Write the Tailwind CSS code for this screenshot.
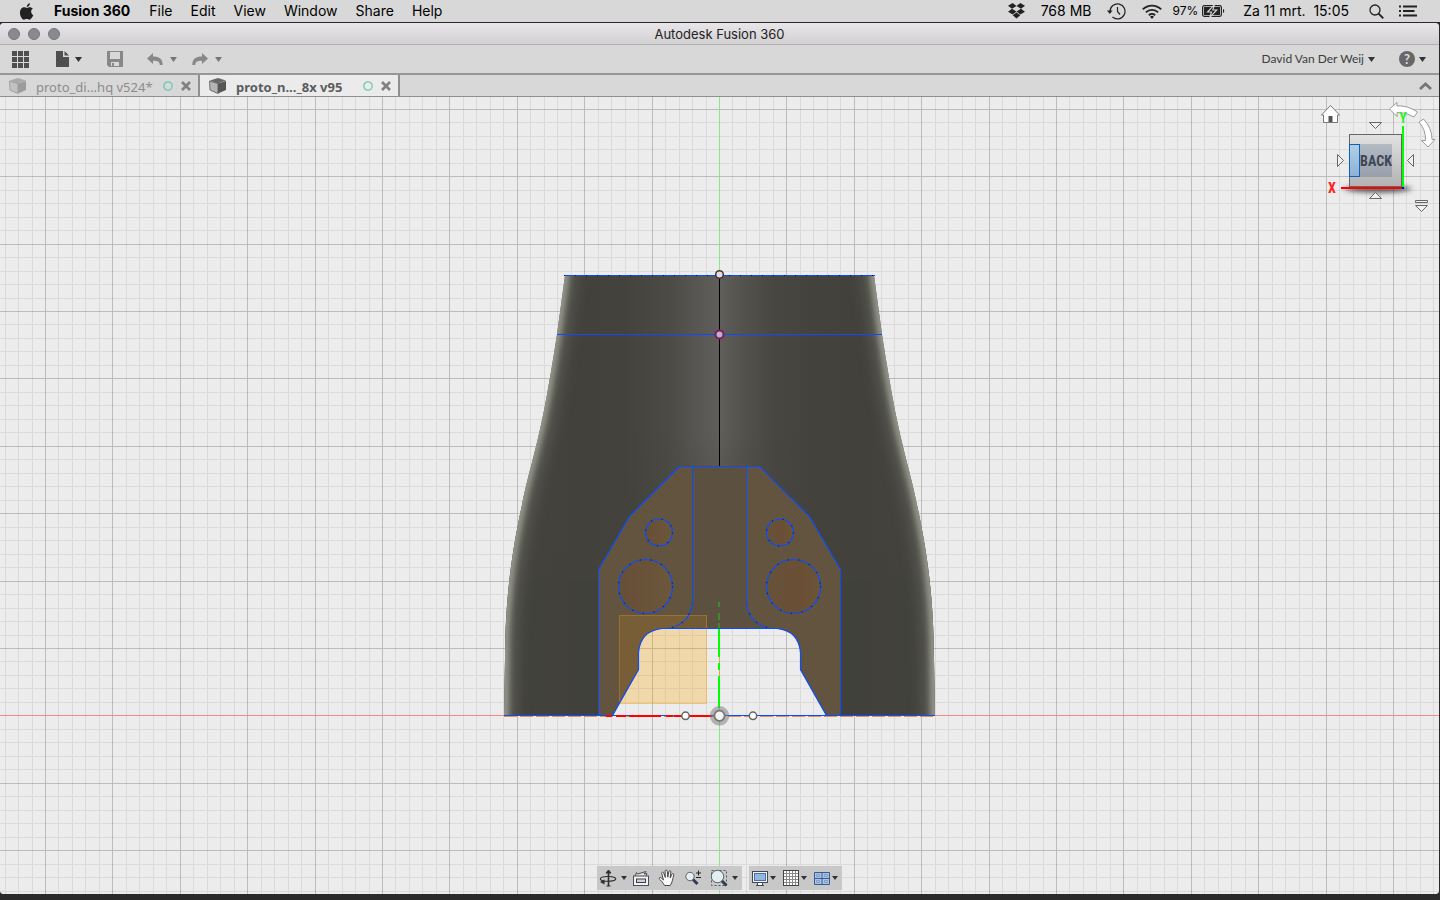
<!DOCTYPE html>
<html lang="nl">
<head>
<meta charset="utf-8">
<meta name="viewport" content="width=device-width, initial-scale=1">
<title>Autodesk Fusion 360</title>
<script src="https://cdn.jsdelivr.net/npm/@tailwindcss/browser@4"></script>
</head>
<body class="flex h-screen flex-col overflow-hidden bg-[#2a2a2a] font-['Inter','Liberation_Sans',sans-serif] text-black">

<!-- System menu bar -->
<header class="flex h-[22px] shrink-0 items-center justify-between bg-[#d8d8d8] text-sm leading-5">
  <nav class="flex items-center gap-[18px] pl-[20px]">
    <button aria-label="Apple" class="mr-[2px] flex w-[14px] justify-center"><svg width="14" height="17" viewBox="0 0 14 17" fill="#222"><path d="M9.900.3c.1 1-.3 1.900-.8 2.500-.6.700-1.400 1.200-2.300 1.100-.1-.9.300-1.900.9-2.500C8.200.8 9.200.4 9.900.3zM13.300 12.300c-.4.900-.6 1.300-1.100 2-.7 1.100-1.600 2.400-2.800 2.400-1 0-1.300-.7-2.700-.7s-1.700.7-2.700.7c-1.200 0-2.100-1.200-2.700-2.200C-.5 11.700-.4 7.900 1 6c.8-1.200 2-1.800 3.100-1.800 1.200 0 1.900.7 2.900.7s1.600-.7 2.900-.7c1 0 2.100.5 2.900 1.500-2.500 1.400-2.100 5 .5 6.600z"/></svg></button>
    <button class="mr-px font-bold">Fusion 360</button>
    <button>File</button>
    <button>Edit</button>
    <button>View</button>
    <button>Window</button>
    <button>Share</button>
    <button>Help</button>
  </nav>
  <div class="flex items-center pr-[23px]">
    <button aria-label="Dropbox" class="mr-4"><svg width="17" height="16" viewBox="0 0 17 16" fill="#222"><path d="M4.700 0 8.500 2.900 4 5.700 0 2.700zM12.300 0 17 2.700 13 5.700 8.500 2.900zM4 5.700 8.500 8.500 4.700 11.500 0 8.700zM13 5.700 17 8.700 12.300 11.500 8.500 8.500zM4.700 12.300 8.500 9.500 12.300 12.300 8.500 15.500z"/></svg></button>
    <span class="mr-4">768 MB</span>
    <button aria-label="Time Machine" class="mr-4"><svg width="19" height="17" viewBox="0 0 19 17" fill="none" stroke="#222" stroke-width="1.200"><path d="M3 8.500A7.500 7.500 0 1 1 5.500 14"/><path d="M10.500 4v4.500l2.500 3"/><path d="M0 7.500h5.600L2.800 11z" fill="#222" stroke="none"/></svg></button>
    <button aria-label="Wi-Fi" class="mr-[10px]"><svg width="20" height="15" viewBox="0 0 20 15" fill="none" stroke="#222" stroke-width="1.900"><path d="M.8 5.400a13 13 0 0 1 18.400 0M3.900 8.400a8.700 8.700 0 0 1 12.200 0M6.900 11.200a4.500 4.500 0 0 1 6.200 0"/><path d="M10 14.900 8 12.700a3 3 0 0 1 4 0z" fill="#222" stroke="none"/></svg></button>
    <span class="mr-1 text-xs leading-5">97%</span>
    <svg class="mr-[18px]" width="23" height="12" viewBox="0 0 23 12" role="img" aria-label="Batterij laadt op"><rect x=".6" y=".6" width="18.800" height="10.800" rx="1.800" fill="none" stroke="#222" stroke-width="1.200"/><rect x="2" y="2" width="16" height="8" fill="#222"/><path d="M12.500-.5 5.500 7h4L7.800 12.500l7-7.500h-4z" fill="#222" stroke="#d8d8d8" stroke-width="1.100"/><path d="M21 4c1.600.4 1.600 3.600 0 4z" fill="#222"/></svg>
    <span class="mr-5 whitespace-pre">Za 11 mrt.  15:05</span>
    <button aria-label="Zoek" class="mr-[15px]"><svg width="15" height="15" viewBox="0 0 15 15" fill="none" stroke="#222" stroke-width="1.300"><circle cx="6" cy="6" r="5"/><path d="M9.600 9.600 14.300 14.300" stroke-width="1.900"/></svg></button>
    <button aria-label="Berichtencentrum"><svg width="18" height="12" viewBox="0 0 18 12" fill="#222"><path d="M0 .5h2v2H0zM0 5h2v2H0zM0 9.500h2v2H0zM4 .5h14v2H4zM4 5h11.500v2H4zM4 9.500h14v2H4z"/></svg></button>
  </div>
</header>

<!-- Application window -->
<div class="mt-px mr-px mb-[6px] flex min-h-0 flex-1 flex-col overflow-hidden rounded-sm bg-[#d8d8d8]">
  <div class="relative flex h-[22px] shrink-0 items-center justify-center border-b border-[#b0b0b0] bg-linear-to-b from-[#e8e6e8] to-[#d2d0d2] text-[13px] leading-5">
    <div class="absolute left-2 flex gap-2">
      <button aria-label="Sluit" class="size-3 rounded-full border border-[#77777b] bg-[#8a8a8e]"></button>
      <button aria-label="Minimaliseer" class="size-3 rounded-full border border-[#77777b] bg-[#8a8a8e]"></button>
      <button aria-label="Vergroot" class="size-3 rounded-full border border-[#77777b] bg-[#8a8a8e]"></button>
    </div>
    <h1 class="text-[#222]">Autodesk Fusion 360</h1>
  </div>

  <div class="flex h-[30px] shrink-0 items-center justify-between border-b-2 border-[#979797] pr-[13px] pl-3">
    <div class="flex items-center">
      <button aria-label="Data Panel" class="mr-[27px]"><svg width="17" height="17" viewBox="0 0 17 17" fill="#4f4f4f"><path d="M0 0h5v5H0zM6 0h5v5H6zM12 0h5v5h-5zM0 6h5v5H0zM6 6h5v5H6zM12 6h5v5h-5zM0 12h5v5H0zM6 12h5v5H6zM12 12h5v5h-5z"/></svg></button>
      <button aria-label="File" class="mr-[25px] flex items-center gap-[6px]"><svg width="13" height="16" viewBox="0 0 13 16" fill="#4f4f4f"><path d="M0 0h7v6h6v10H0zM8.500 0 13 4.500H8.500z"/></svg><svg width="7" height="5" viewBox="0 0 7 5" fill="#333"><path d="M0 0h7L3.500 5z"/></svg></button>
      <button aria-label="Save" class="mr-6"><svg width="16" height="16" viewBox="0 0 16 16"><path fill="#888" fill-rule="evenodd" d="M0 0h16v16H2L0 14zM3 1v7h10V1zM4 11v4h8v-4z"/><path fill="#888" d="M5 12h2v3H5z"/></svg></button>
      <button aria-label="Undo" class="mr-[15px] flex items-center gap-[7px]"><svg width="16" height="12" viewBox="0 0 16 12" fill="#888"><path d="M0 5.500 6 0v3.500c6.500 0 9.800 2.600 9.600 8.500h-2.800C12.600 8.700 10.700 7.600 6 7.700V11z"/></svg><svg width="7" height="5" viewBox="0 0 7 5" fill="#777"><path d="M0 0h7L3.500 5z"/></svg></button>
      <button aria-label="Redo" class="flex items-center gap-[7px]"><svg width="16" height="12" viewBox="0 0 16 12" fill="#888"><path d="M16 5.500 10 0v3.500C3.500 3.500.2 6.100.4 12h2.800c.2-3.300 2.100-4.400 6.800-4.300V11z"/></svg><svg width="7" height="5" viewBox="0 0 7 5" fill="#777"><path d="M0 0h7L3.500 5z"/></svg></button>
    </div>
    <div class="flex items-center gap-6 font-['Lato','Open_Sans',sans-serif] text-xs text-[#3c3c3c]">
      <button class="flex items-center gap-1">David Van Der Weij <svg width="7" height="5" viewBox="0 0 7 5" fill="#333"><path d="M0 0h7L3.500 5z"/></svg></button>
      <button aria-label="Help" class="flex items-center gap-1"><span class="flex size-4 items-center justify-center rounded-full bg-[#686868] text-[13px] leading-4 font-bold text-[#dddddd]">?</span><svg width="7" height="5" viewBox="0 0 7 5" fill="#333"><path d="M0 0h7L3.500 5z"/></svg></button>
    </div>
  </div>

  <div class="flex h-[22px] shrink-0 items-center justify-between border-b border-[#8f8f8f] pr-[7px] font-['Noto_Sans','Open_Sans',sans-serif] text-[13px]">
    <div role="tablist" class="flex h-full">
      <div class="flex w-[200px] items-center border-r-2 border-[#8f8f8f] pl-[9px]">
        <svg class="mr-[9px]" width="18" height="16" viewBox="0 0 18 16"><path d="M1 2.500 9 0l8 2.500-8 3z" fill="#aaa"/><path d="M.5 3 9 5.500v10L1 12z" fill="#c2c2c2" stroke="#969696" stroke-width=".8"/><path d="M9 5.500 17 3v9l-8 3.500z" fill="#9c9c9c"/></svg>
        <button role="tab" aria-selected="false" class="flex-1 pt-1 text-left text-[#8c8c8c]">proto_di...hq v524*</button>
        <svg class="mr-2" width="10" height="10" viewBox="0 0 10 10" fill="none" stroke="#6cc9b1" stroke-width="1.300"><circle cx="5" cy="5" r="4.200"/></svg>
        <button aria-label="Close proto_di...hq v524*" class="mr-[7px]"><svg width="10" height="10" viewBox="0 0 10 10" stroke="#808080" stroke-width="2.600"><path d="m1 1 8 8M9 1 1 9"/></svg></button>
      </div>
      <div class="flex w-[200px] items-center border-r-2 border-[#8f8f8f] bg-[#ebebeb] pl-[9px]">
        <svg class="mr-[9px]" width="18" height="16" viewBox="0 0 18 16"><path d="M1 2.500 9 0l8 2.500-8 3z" fill="#666"/><path d="M.5 3 9 5.500v10L1 12z" fill="#b4b4b4" stroke="#555" stroke-width=".8"/><path d="M9 5.500 17 3v9l-8 3.500z" fill="#555"/></svg>
        <button role="tab" aria-selected="true" class="flex-1 pt-1 text-left font-bold text-[#5c5c5c]">proto_n..._8x v95</button>
        <svg class="mr-2" width="10" height="10" viewBox="0 0 10 10" fill="none" stroke="#6cc9b1" stroke-width="1.300"><circle cx="5" cy="5" r="4.200"/></svg>
        <button aria-label="Close proto_n..._8x v95" class="mr-[7px]"><svg width="10" height="10" viewBox="0 0 10 10" stroke="#808080" stroke-width="2.600"><path d="m1 1 8 8M9 1 1 9"/></svg></button>
      </div>
    </div>
    <button aria-label="Collapse"><svg width="13" height="8" viewBox="0 0 13 8" fill="none" stroke="#777" stroke-width="2.800"><path d="m1 7 5.500-5L12 7"/></svg></button>
  </div>

  <!-- Modelling canvas -->
  <main class="relative min-h-0 flex-1 bg-[#ececec]">
    <svg class="block h-full w-full" viewBox="0 97 1439 797" preserveAspectRatio="xMidYMid slice" role="img" aria-label="Model, back view">
      <defs>
        <path id="body" d="M565 275.500 557 334.500Q550 380 543.500 413C534 459 528 474 522 505C512 550 505 600 505 660L504 716H612.500L638.500 669.500V653Q640 631 662 628.500H777Q799 631 800.500 653V669.500L826.500 716H935L934 660C934 600 927 550 917 505C911 474 905 459 895.500 413Q889 380 882 334.500L874 275.500Z"/>
        <path id="plate" d="M679.500 466.500 629.500 516.500 598.500 569.500V715.500H612.500L638.500 669.500V653Q640 631 662 628.500H777Q799 631 800.500 653V669.500L826.500 715.500H840.500V569.500L809.500 516.500 759.500 466.500Z"/>
        <clipPath id="inBody"><use href="#body"/></clipPath>
        <linearGradient id="shade" gradientUnits="userSpaceOnUse" x1="504" x2="935" y1="0" y2="0">
          <stop offset="0" stop-color="#464540"/><stop offset=".17" stop-color="#42413c"/><stop offset=".28" stop-color="#43423d"/><stop offset=".38" stop-color="#4b4a45"/><stop offset=".44" stop-color="#565551"/><stop offset=".5" stop-color="#5f5e5a"/><stop offset=".56" stop-color="#52514c"/><stop offset=".62" stop-color="#484742"/><stop offset=".72" stop-color="#43423d"/><stop offset=".83" stop-color="#42413c"/><stop offset="1" stop-color="#464540"/>
        </linearGradient>
        <linearGradient id="low" x1="0" x2="0" y1="0" y2="1"><stop offset="0" stop-color="#42413c" stop-opacity="0"/><stop offset="1" stop-color="#42413c" stop-opacity=".7"/></linearGradient>
        <linearGradient id="boreL"><stop offset="0" stop-color="#664f36"/><stop offset="1" stop-color="#6c563c"/></linearGradient>
        <linearGradient id="boreR"><stop offset="0" stop-color="#66523a"/><stop offset=".6" stop-color="#6a4f35"/><stop offset="1" stop-color="#6b5438"/></linearGradient>
        <filter id="wide" x="-30%" y="-10%" width="160%" height="120%" color-interpolation-filters="sRGB"><feGaussianBlur stdDeviation="9"/></filter>
        <filter id="tight" x="-30%" y="-10%" width="160%" height="120%" color-interpolation-filters="sRGB"><feGaussianBlur stdDeviation="3"/></filter>
      </defs>

      <g shape-rendering="crispEdges" fill="none">
        <path id="gridMinor" stroke="#000" stroke-opacity=".075"/>
        <path id="gridMajor" stroke="#000" stroke-opacity=".2"/>
        <path d="M-800 715.500H2240" stroke="#f58a8a"/>
        <path d="M719.500-400V275M719.500 716V1400" stroke="#8be58b"/>
      </g>

      <use href="#body" fill="url(#shade)"/>
      <g clip-path="url(#inBody)" fill="none">
        <rect x="500" y="430" width="440" height="150" fill="url(#low)"/>
        <rect x="500" y="580" width="440" height="140" fill="#42413c" fill-opacity=".7"/>
        <g stroke="#7c7e74">
          <path filter="url(#wide)" stroke-width="14" stroke-opacity=".7" d="M562 240 565 275.500 557 334.500Q550 380 543.500 413C534 459 528 474 522 505C512 550 505 600 505 660L504 750M877 240 874 275.500 882 334.500Q889 380 895.500 413C905 459 911 474 917 505C927 550 934 600 934 660L935 750"/>
          <path filter="url(#tight)" stroke="#a3a69a" stroke-width="7" d="M562 240 565 275.500 557 334.500Q550 380 543.500 413C534 459 528 474 522 505C512 550 505 600 505 660L504 750M877 240 874 275.500 882 334.500Q889 380 895.500 413C905 459 911 474 917 505C927 550 934 600 934 660L935 750"/>
        </g>
      </g>

      <use href="#plate" fill="#635440"/>
      <path d="M692.500 466.500H746.500V605Q750 625 771 628.500H668Q689 625 692.500 605Z" fill="#5c5140"/>
      <circle cx="659" cy="532.500" r="13.500" fill="url(#boreL)"/><circle cx="645.500" cy="586.500" r="27" fill="url(#boreL)"/>
      <circle cx="780" cy="532.500" r="13.500" fill="url(#boreR)"/><circle cx="793.500" cy="586.500" r="27" fill="url(#boreR)"/>

      <!-- Work plane handle -->
      <path d="M638.500 669.500V653Q640 631 662 628.500H707V704H619.500Z" fill="#ffa500" fill-opacity=".28"/>
      <path d="M619.500 615.500H707V628.500H662Q640 631 638.500 653V669.500L619.500 703.500Z" fill="#ffa500" fill-opacity=".13"/>
      <rect x="619.500" y="615.500" width="87" height="88" fill="none" stroke="#f0a020" stroke-opacity=".35"/>

      <g fill="none" stroke="#0a4dff" stroke-width="1.200">
        <path d="M679.500 466.500 629.500 516.500 598.500 569.500M612.500 715.500 638.500 669.500V653Q640 631 662 628.500M777 628.500Q799 631 800.500 653V669.500L826.500 715.500M840.500 569.500 809.500 516.500 759.500 466.500M692.500 603Q690 624 668 628.500M746.500 603Q749 624 771 628.500"/>
        <circle cx="659" cy="532.500" r="13.500"/><circle cx="780" cy="532.500" r="13.500"/><circle cx="645.500" cy="586.500" r="27"/><circle cx="793.500" cy="586.500" r="27"/>
      </g>
      <g fill="none" stroke="#111a30" stroke-width="1.200" stroke-dasharray="1 10">
        <circle cx="659" cy="532.500" r="13.500"/><circle cx="780" cy="532.500" r="13.500"/><circle cx="645.500" cy="586.500" r="27"/><circle cx="793.500" cy="586.500" r="27"/>
        <path d="M692.500 603Q690 624 668 628.500M746.500 603Q749 624 771 628.500"/>
      </g>
      <g fill="none" shape-rendering="crispEdges">
        <path stroke="#0a4dff" d="M564 275.500H875M557 334.500H882M679 466.500H760M662 628.500H777M598.500 569V716M840.500 569V716M692.500 466V604M746.500 466V604M504 715.500H935"/>
        <path stroke="#111" stroke-dasharray="1 10" d="M564 275.500H875"/>
        <path stroke="#000" d="M719.500 278V466"/>
        <path stroke="#d9935c" stroke-dasharray="13 3" d="M504 716.500H935"/>
        <path stroke="#ff0000" stroke-width="2" d="M606 716H612M616 716H626M629 716H661M666 716H673M674 716H712"/>
        <path stroke="#3f8a2a" stroke-width="2" d="M719 602V607M719 613V620M719 623V628"/>
        <path stroke="#d9a860" d="M719.500 629V708"/>
        <path stroke="#00ff00" stroke-width="2" d="M719 629V657M719 663V670M719 676V708"/>
      </g>
      <g stroke-width="1.500">
        <circle cx="719.500" cy="274.500" r="3.800" fill="#e6dde4" stroke="#40303a"/>
        <circle cx="719.500" cy="334.500" r="4" fill="#b8b4d0" stroke="#7d1a62" stroke-width="2"/>
        <circle cx="685.500" cy="715.800" r="3.700" fill="#fff" stroke="#666"/>
        <circle cx="753" cy="715.800" r="3.700" fill="#fff" stroke="#666"/>
        <circle cx="719.500" cy="715.800" r="8" fill="none" stroke="#777" stroke-opacity=".5" stroke-width="3.500"/>
        <circle cx="719.500" cy="715.800" r="5.200" fill="#f4f4f4" stroke="#777" stroke-width="2"/>
      </g>
    </svg>

    <!-- View cube -->
    <svg class="absolute top-0 right-0" width="119" height="123" viewBox="1320 97 119 123" role="img" aria-label="View cube, back">
      <defs>
        <linearGradient id="face" x1="0" x2="0" y1="0" y2="1"><stop offset="0" stop-color="#e2e2e2"/><stop offset="1" stop-color="#b2b2b2"/></linearGradient>
        <linearGradient id="inner" x1="0" x2="0" y1="0" y2="1"><stop offset="0" stop-color="#b2bac4"/><stop offset="1" stop-color="#989fab"/></linearGradient>
        <linearGradient id="side" x1="0" x2="0" y1="0" y2="1"><stop offset="0" stop-color="#b2cfe8"/><stop offset="1" stop-color="#8cb2d6"/></linearGradient>
        <filter id="soft" x="-30%" y="-100%" width="160%" height="300%"><feGaussianBlur stdDeviation="2.500"/></filter>
      </defs>
      <ellipse cx="1378" cy="189" rx="34" ry="3.500" fill="#333" fill-opacity=".8" filter="url(#soft)"/>
      <g fill="#fff" stroke="#777">
        <path d="M1321.500 115 1330.500 105.500 1339.500 115H1337.500V122.500H1323.500V115Z"/>
        <path d="M1328.500 122V116H1332.500V122Z" fill="#555" stroke="none"/>
        <path d="M1389.500 109 1397 102.500V106Q1407 105 1417.500 112L1414 117Q1406 112 1397 112.500V116.500Z" stroke-width=".7"/>
        <path d="M1419 122 1423.500 119Q1432 128 1432 139.500H1435L1428 147 1421.500 140.500H1425.500Q1426 130 1419 122Z" stroke-width=".7"/>
      </g>
      <rect x="1349.500" y="134.500" width="52" height="52" fill="url(#face)" stroke="#666"/>
      <rect x="1360" y="144" width="32" height="33" fill="url(#inner)"/>
      <rect x="1349.500" y="144.500" width="10" height="32" fill="url(#side)" stroke="#0a63b8"/>
      <path d="M1341 188H1402" stroke="#f00" stroke-width="2"/><path d="M1403 126V187" stroke="#0f0" stroke-width="2"/><path d="M1402 187H1404V189H1402Z" fill="#00f"/>
      <g text-anchor="middle" font-family="'Liberation Sans Narrow','Roboto Condensed',Roboto,sans-serif" font-size="14" font-weight="700">
        <text x="1376" y="166" fill="#3e4654">BACK</text>
        <text x="1332" y="193" fill="#ff2020">X</text>
        <text x="1403" y="123" fill="#2cf02c">Y</text>
      </g>
      <g fill="#f0f0f0" stroke="#666">
        <path d="M1369.500 122.500H1381.500L1375.500 128.500ZM1369.500 198.500H1381.500L1375.500 192.500ZM1337.500 154.500V166.500L1343.500 160.500ZM1413.500 154.500V166.500L1407.500 160.500Z"/>
        <path d="M1415.500 200.500H1427.500V202.500H1415.500ZM1415.500 205.500H1427.500L1421.500 211.500Z"/>
      </g>
    </svg>

    <!-- Navigation bar -->
    <div class="absolute inset-x-0 bottom-1 flex justify-center gap-[7px]">
      <div class="flex h-6 items-center bg-[#c8c8c8] pr-1 pl-[2px]">
        <button aria-label="Orbit" class="flex w-[29px] items-center gap-1"><svg width="18" height="18" viewBox="0 0 18 18" fill="none" stroke="#2b2f36"><path d="M9.500 2v15" stroke-width="1.600"/><path d="M7 4 9.500 1 12 4zM7.500 17h4" fill="#2b2f36"/><path d="M6 12.500C-.5 11.500-.5 7.500 8 7.500S18 9.500 16 11 11 12.500 4 12" stroke-width="1.100"/><path d="M1 13 5.500 10.500v5z" fill="#2b2f36" stroke="none"/></svg><svg width="6" height="4" viewBox="0 0 6 4" fill="#333"><path d="M0 0h6L3 4z"/></svg></button>
        <button aria-label="Look at" class="flex w-[26px] justify-center"><svg width="18" height="18" viewBox="0 0 18 18"><path d="m3 7.500 1.500-4 1 1.500L14 2.500l-2 2.500 3-.5-1.500 3" fill="#e0e0e0" stroke="#4a4f57"/><rect x="1.500" y="7" width="15" height="9.500" fill="#f2f2f2" stroke="#4a4f57"/><rect x="4.500" y="10" width="9" height="3.500" fill="#ccd2da" stroke="#3b4048"/></svg></button>
        <button aria-label="Pan" class="flex w-[26px] justify-center"><svg width="18" height="18" viewBox="0 0 18 18"><path d="M6.500 16.500C5 13.500 3 11.500 1.200 9.800c-.4-1.300 1-1.700 2-.9L5.500 11 3.700 4.500c-.3-1.500 1.500-2 2-.6l1.600 4.500-.2-6.200c0-1.600 2-1.600 2.200 0l.5 6 1-5.500c.4-1.500 2.200-1.200 2 .3l-.6 6 1.700-3.800c.7-1.300 2.200-.5 1.800.8-.8 2.800-1.200 7.500-3.500 10.500z" fill="#fafafa" stroke="#4a4a4a"/></svg></button>
        <button aria-label="Zoom" class="flex w-[26px] justify-center"><svg width="18" height="18" viewBox="0 0 18 18"><path d="m9 10.500 4.500 4.500" stroke="#343c4e" stroke-width="3"/><circle cx="6" cy="7.500" r="4.200" fill="#e2f0f4" stroke="#56606a"/><path d="M12 4h5M14.500 1.500v5M12 8.500h5" stroke="#222"/></svg></button>
        <button aria-label="Fit" class="flex w-[32px] items-center justify-end gap-1"><svg width="18" height="18" viewBox="0 0 18 18"><rect x="1.500" y="1.500" width="15" height="15" fill="none" stroke="#555" stroke-dasharray="2 2"/><path d="m11.500 11.500 5 5" stroke="#343c4e" stroke-width="3"/><circle cx="7.500" cy="7.500" r="6.200" fill="#e2f0f0" stroke="#56606a"/></svg><svg width="6" height="4" viewBox="0 0 6 4" fill="#333"><path d="M0 0h6L3 4z"/></svg></button>
      </div>
      <div class="flex h-6 items-center gap-[6px] bg-[#c8c8c8] pr-1 pl-[2px]">
        <button aria-label="Display settings" class="flex items-center gap-px"><svg width="18" height="17" viewBox="0 0 18 17"><rect x="1.500" y="1.500" width="15" height="11" fill="#f2f4f6" stroke="#3f4957"/><rect x="3.500" y="3.500" width="11" height="7" fill="#92b8e0" stroke="#4a72a8"/><path d="M6.500 13v2.500h5V13M5 15.500h8" fill="#fff" stroke="#3f4957"/></svg><svg width="6" height="4" viewBox="0 0 6 4" fill="#333"><path d="M0 0h6L3 4z"/></svg></button>
        <button aria-label="Grid and snaps" class="flex items-center gap-px"><svg width="18" height="17" viewBox="0 0 18 17"><rect x="1.500" y=".5" width="15" height="15" fill="#fff" stroke="#444"/><path d="M4.500 1v14M7.500 1v14M10.500 1v14M13.500 1v14M2 3.500h14M2 6.500h14M2 9.500h14M2 12.500h14" stroke="#8a8a8a"/></svg><svg width="6" height="4" viewBox="0 0 6 4" fill="#333"><path d="M0 0h6L3 4z"/></svg></button>
        <button aria-label="Viewports" class="flex items-center gap-px"><svg width="18" height="17" viewBox="0 0 18 17"><path d="M1.500 2.500h15v12h-15z" fill="#a8c4e8" stroke="#3c5a8c"/><path d="M9 2v13M1 8.500h16" stroke="#3c5a8c"/><path d="M3.500 4.500h3v2h-3zM11.500 4.500h3v2h-3zM3.500 10.500h3v2h-3zM11.500 10.500h3v2h-3z" fill="#b8d0ee" stroke="#7c9cc8"/></svg><svg width="6" height="4" viewBox="0 0 6 4" fill="#333"><path d="M0 0h6L3 4z"/></svg></button>
      </div>
    </div>
  </main>
</div>

<script>
  // Grid lines radiate from the origin; every fifth line is a major one.
  const origin = { x: 719, y: 715.4 }, step = 13.48;
  let minor = '', major = '';
  for (let i = -120; i <= 120; i++) {
    const x = Math.round(origin.x + i * step) + 0.5;
    const y = Math.round(origin.y + i * step) + 0.5;
    const d = `M${x} -800V1800M-900 ${y}H2340`;
    if (i % 5 === 0) major += d; else minor += d;
  }
  document.getElementById('gridMinor').setAttribute('d', minor);
  document.getElementById('gridMajor').setAttribute('d', major);
</script>
</body>
</html>
